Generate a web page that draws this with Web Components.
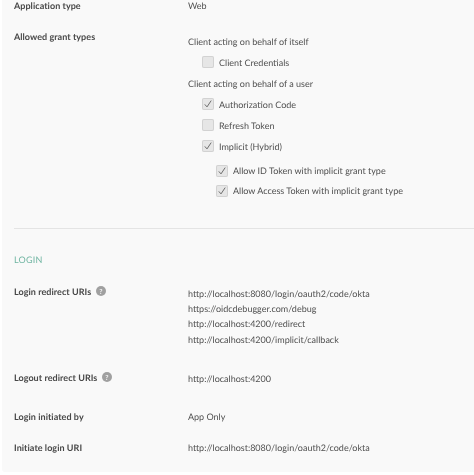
<!DOCTYPE html>
<html>
<head>
<meta charset="utf-8">
<style>
  html, body { margin: 0; background: #fff; }
  body { width: 474px; height: 475px; overflow: hidden; font-family: Lato, "Liberation Sans", sans-serif; font-size: 9px; color: #505050; text-rendering: geometricPrecision; }
</style>
</head>
<body>
<settings-panel>
  <field-row label="Application type" style="height:31.5px"><url-line>Web</url-line></field-row>
  <field-row label="Allowed grant types" style="height:199px" offset="1.5">
    <plain-line>Client acting on behalf of itself</plain-line>
    <check-row>Client Credentials</check-row>
    <plain-line>Client acting on behalf of a user</plain-line>
    <check-row checked>Authorization Code</check-row>
    <check-row>Refresh Token</check-row>
    <check-row checked>Implicit (Hybrid)</check-row>
    <check-row checked nested first>Allow ID Token with implicit grant type</check-row>
    <check-row checked nested>Allow Access Token with implicit grant type</check-row>
  </field-row>
  <section-head>LOGIN</section-head>
  <field-row label="Login redirect URIs" help offset="2.5" style="height:86px">
    <url-line>http://localhost:8080/login/oauth2/code/okta</url-line>
    <url-line>https://oidcdebugger.com/debug</url-line>
    <url-line>http://localhost:4200/redirect</url-line>
    <url-line>http://localhost:4200/implicit/callback</url-line>
  </field-row>
  <field-row label="Logout redirect URIs" help offset="1" style="height:39px"><url-line>http://localhost:4200</url-line></field-row>
  <field-row label="Login initiated by" style="height:31px"><url-line>App Only</url-line></field-row>
  <field-row label="Initiate login URI"><url-line>http://localhost:8080/login/oauth2/code/okta</url-line></field-row>
</settings-panel>
<script>
function shadow(el, html){
  el.attachShadow({mode: 'open'}).innerHTML = html
}

class SettingsPanel extends HTMLElement {
  constructor(){
    super()
    shadow(this, `
      <style>
        :host{ display: block; margin-left: 2px; height: 472px; background: #f9f9f9; overflow: hidden; border-radius: 0 0 0 3px; filter: blur(0.3px); }
        .inner{ margin-top: -2.5px; }
      </style>
      <div class="inner"><slot></slot></div>`)
  }
}

class FieldRow extends HTMLElement {
  constructor(){
    super()
    const help = this.hasAttribute('help') ? `
      <svg width="10" height="10" viewBox="0 0 10 10"><circle cx="5" cy="5" r="5" fill="#a0a0a0"/><text x="5" y="7.6" text-anchor="middle" font-size="7" font-weight="700" fill="#f4f4f4" font-family="Lato, sans-serif">?</text></svg>` : ''
    shadow(this, `
      <style>
        :host{ display: grid; grid-template-columns: 174px 1fr; padding-left: 12px; box-sizing: border-box; line-height: 15px; }
        .label{ display: flex; align-items: center; gap: 5px; height: 15px; font-weight: 700; color: #484848; letter-spacing: .05px; }
        .value{ margin-top: ${this.getAttribute('offset') || 0}px; }
      </style>
      <div class="label"><span>${this.getAttribute('label')}</span>${help}</div>
      <div class="value"><slot></slot></div>`)
  }
}

class PlainLine extends HTMLElement {
  constructor(){
    super()
    shadow(this, `<style>:host{ display: block; height: 21px; line-height: 21px; }</style><slot></slot>`)
  }
}

class UrlLine extends HTMLElement {
  constructor(){
    super()
    shadow(this, `<style>:host{ display: block; height: 15.2px; line-height: 15px; }</style><slot></slot>`)
  }
}

class CheckRow extends HTMLElement {
  constructor(){
    super()
    const tick = this.hasAttribute('checked')
      ? `<svg width="12" height="12" viewBox="0 0 12 12"><path d="M2.8 6.4 L5 8.9 L9.2 2.6" fill="none" stroke="#6e6e6e" stroke-width="1"/></svg>` : ''
    const nested = this.hasAttribute('nested')
    shadow(this, `
      <style>
        :host{ display: flex; align-items: center; gap: 5px; height: ${nested ? 20 : 21}px; margin-left: ${nested ? 28 : 14}px; ${this.hasAttribute('first') ? 'margin-top: 4px;' : ''} }
        .box{ width: 12px; height: 12px; box-sizing: border-box; background: #e6e6e6; box-shadow: inset 0 0 0 1px #d2d2d2; border-radius: 2px; display: block; }
        svg{ display: block; }
      </style>
      <span class="box">${tick}</span><span><slot></slot></span>`)
  }
}

class SectionHead extends HTMLElement {
  constructor(){
    super()
    shadow(this, `
      <style>
        :host{ display: block; }
        .rule{ height: 1px; background: #e4e4e4; margin-left: 12px; }
        .title{ color: #70b5a2; padding: 22.5px 0 17px 12px; line-height: 15px; letter-spacing: .2px; }
      </style>
      <div class="rule"></div><div class="title"><slot></slot></div>`)
  }
}

customElements.define('settings-panel', SettingsPanel)
customElements.define('field-row', FieldRow)
customElements.define('plain-line', PlainLine)
customElements.define('url-line', UrlLine)
customElements.define('check-row', CheckRow)
customElements.define('section-head', SectionHead)
</script>
</body>
</html>
